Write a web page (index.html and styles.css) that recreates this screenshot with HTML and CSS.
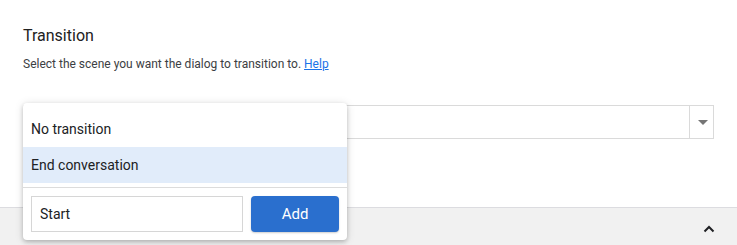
FILE: index.html
```html
<!DOCTYPE html>
<html>
<head>
<meta charset="utf-8">
<link rel="stylesheet" href="styles.css">
</head>
<body>
<div class="page">
  <div class="content">
    <h2 class="title">Transition</h2>
    <p class="desc">Select the scene you want the dialog to transition to. <a class="help" href="#">Help</a></p>
    <div class="select">
      <div class="select-value"></div>
      <div class="select-arrow"><span class="tri"></span></div>
    </div>
  </div>
  <div class="footer">
    <svg class="chev" width="12" height="8" viewBox="0 0 12 8"><path d="M1.5 6.5 L6 2 L10.5 6.5" fill="none" stroke="#202124" stroke-width="2"/></svg>
  </div>
  <div class="menu">
    <div class="options">
      <div class="option">No transition</div>
      <div class="option selected">End conversation</div>
    </div>
    <div class="add-row">
      <div class="input">Start</div>
      <button class="add-btn">Add</button>
    </div>
  </div>
</div>
</body>
</html>
```
FILE: styles.css
```css
html, body {
  margin: 0;
  padding: 0;
  background: #fff;
}
body {
  font-family: Roboto, "Noto Sans", sans-serif;
  color: #202124;
}
.page {
  position: relative;
  width: 737px;
  height: 245px;
  overflow: hidden;
  display: flex;
  flex-direction: column;
}
.content {
  padding: 25px 23px 0 23px;
  height: 183px;
  box-sizing: border-box;
}
.title {
  margin: 0;
  font-size: 16px;
  font-weight: 400;
  line-height: 22px;
  color: #212121;
}
.desc {
  margin: 9px 0 0 0;
  font-size: 12px;
  line-height: 16px;
  color: #3c4043;
}
.help {
  color: #1a73e8;
  text-decoration: underline;
}
.select {
  margin-top: 33px;
  height: 34px;
  width: 691px;
  box-sizing: border-box;
  border: 1px solid #dadada;
  display: flex;
}
.select-value {
  flex: 1;
}
.select-arrow {
  width: 23px;
  border-left: 1px solid #dadada;
  display: flex;
  align-items: center;
  justify-content: center;
}
.tri {
  width: 0;
  height: 0;
  border-left: 5px solid transparent;
  border-right: 5px solid transparent;
  border-top: 5px solid #757575;
  margin-left: 2px;
}
.footer {
  margin-top: 24px;
  flex: 1;
  background: #f1f1f1;
  border-top: 1px solid #dcdce0;
  display: flex;
  justify-content: flex-end;
  align-items: center;
  padding-right: 22px;
  padding-top: 4px;
}
.chev {
  display: block;
}
.menu {
  position: absolute;
  left: 23px;
  top: 103px;
  width: 324px;
  height: 137px;
  background: #fff;
  border-radius: 4px;
  box-shadow: 0 2px 4px rgba(0,0,0,0.2), 0 1px 10px rgba(0,0,0,0.12);
  padding-top: 8px;
  box-sizing: border-box;
}
.option {
  height: 36px;
  line-height: 36px;
  padding-left: 8px;
  font-size: 14px;
  color: #202124;
}
.option.selected {
  background: #e1ecfa;
}
.add-row {
  margin-top: 4px;
  border-top: 1px solid #dcdcdc;
  padding: 8px 8px 0 8px;
  display: flex;
  gap: 8px;
}
.input {
  width: 212px;
  height: 36px;
  box-sizing: border-box;
  border: 1px solid #d6d6d6;
  padding-left: 8px;
  line-height: 34px;
  font-size: 14px;
  color: #202124;
}
.add-btn {
  width: 88px;
  height: 36px;
  border: none;
  border-radius: 4px;
  background: #2a6fce;
  color: #fff;
  font-family: Roboto, "Noto Sans", sans-serif;
  font-size: 15px;
  box-shadow: 0 1px 2px rgba(0,0,0,0.2);
}
```
